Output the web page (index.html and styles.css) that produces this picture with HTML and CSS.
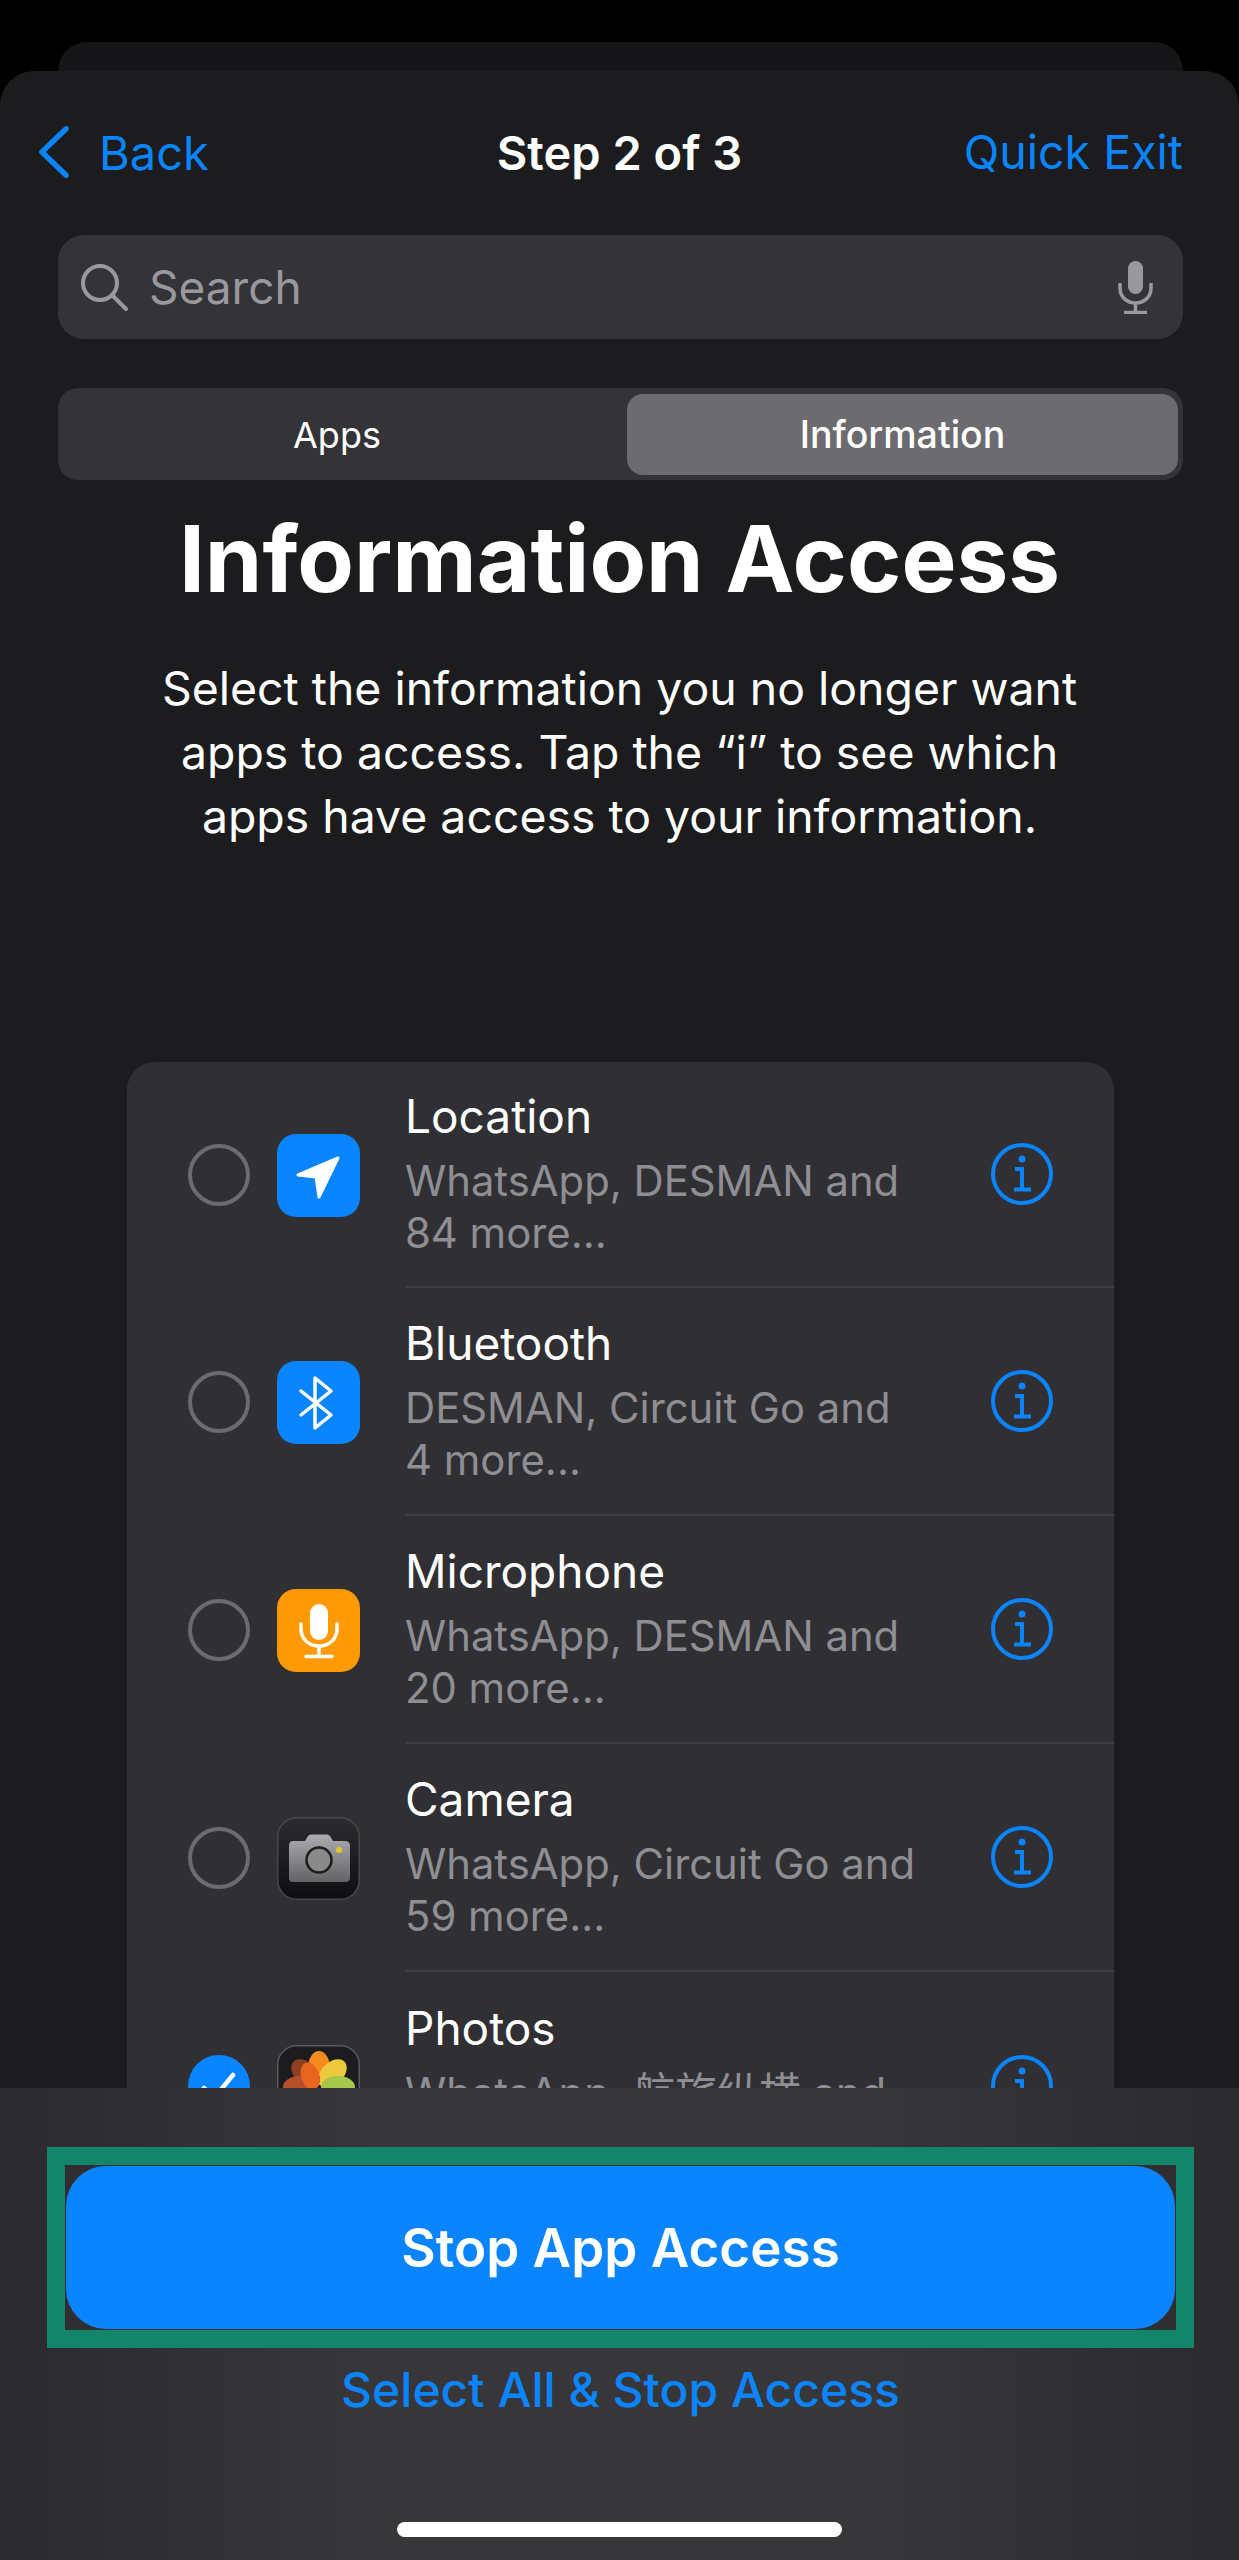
FILE: index.html

```html
<!DOCTYPE html>
<html lang="en">
<head>
  <meta charset="UTF-8" />
  <meta name="viewport" content="width=device-width, initial-scale=1.0"/>
  <title>Information Access</title>
  <link rel="stylesheet" href="styles.css">
</head>
<body>
  <div class="sheet-behind"></div>

  <div class="sheet">
    <!-- nav -->
    <header class="nav">
      <a class="nav-back">
        <svg class="chevron" viewBox="0 0 34 54"><path d="M30 3 L5 27 L30 51"/></svg>
        Back
      </a>
      <div class="nav-title">Step 2 of 3</div>
      <a class="nav-exit">Quick Exit</a>
    </header>

    <!-- search -->
    <div class="search">
      <svg class="search-glass" viewBox="0 0 48 48"><circle cx="20" cy="20" r="17"/><path d="M32 32 L46 46"/></svg>
      <span class="search-text">Search</span>
      <svg class="search-mic" viewBox="0 0 35 53">
        <rect class="fill" x="10" y="0" width="15" height="33" rx="7.5"/>
        <path d="M2 22 V27 C2 36 9 42 17.5 42 C26 42 33 36 33 27 V22 M17.5 42 V51 M6 51.5 H29"/>
      </svg>
    </div>

    <!-- tabs -->
    <div class="tabs">
      <div class="tab">Apps</div>
      <div class="tab tab-on">Information</div>
    </div>

    <main class="scroll">
      <h1>Information Access</h1>
      <p class="intro">Select the information you no longer want<br>apps to access. Tap the “i” to see which<br>apps have access to your information.</p>

      <section class="card">
        <div class="row">
          <span class="radio"></span>
          <svg class="app" viewBox="0 0 83 83">
            <rect width="83" height="83" rx="19" fill="#0a84ff"/>
            <path d="M61 24 L21 41 L39 43 L42 63 Z" fill="#fff" stroke="#fff" stroke-width="3" stroke-linejoin="round"/>
          </svg>
          <div class="row-body">
            <div class="row-text">
              <div class="row-name">Location</div>
              <div class="row-sub">WhatsApp, DESMAN and<br>84 more...</div>
            </div>
            <svg class="info" viewBox="0 0 62 62"><circle cx="31" cy="31" r="29"/><circle class="dot" cx="31" cy="16" r="3.5"/><path d="M24 26 H31 V46 M23 46.5 H40"/></svg>
          </div>
        </div>

        <div class="row">
          <span class="radio"></span>
          <svg class="app" viewBox="0 0 83 83">
            <rect width="83" height="83" rx="19" fill="#0a84ff"/>
            <path d="M24 30 L54 54 L38 67 V17 L54 30 L24 54" fill="none" stroke="#fff" stroke-width="3.5" stroke-linejoin="round" stroke-linecap="round"/>
          </svg>
          <div class="row-body">
            <div class="row-text">
              <div class="row-name">Bluetooth</div>
              <div class="row-sub">DESMAN, Circuit Go and<br>4 more...</div>
            </div>
            <svg class="info" viewBox="0 0 62 62"><circle cx="31" cy="31" r="29"/><circle class="dot" cx="31" cy="16" r="3.5"/><path d="M24 26 H31 V46 M23 46.5 H40"/></svg>
          </div>
        </div>

        <div class="row">
          <span class="radio"></span>
          <svg class="app" viewBox="0 0 83 83">
            <rect width="83" height="83" rx="19" fill="#ff9a05"/>
            <rect x="33" y="15" width="18" height="36" rx="9" fill="#fff"/>
            <path d="M24 35 V40 C24 50 32 57 42 57 C52 57 60 50 60 40 V35 M42 57 V67 M29 67.5 H55" fill="none" stroke="#fff" stroke-width="3.5" stroke-linecap="round"/>
          </svg>
          <div class="row-body">
            <div class="row-text">
              <div class="row-name">Microphone</div>
              <div class="row-sub">WhatsApp, DESMAN and<br>20 more...</div>
            </div>
            <svg class="info" viewBox="0 0 62 62"><circle cx="31" cy="31" r="29"/><circle class="dot" cx="31" cy="16" r="3.5"/><path d="M24 26 H31 V46 M23 46.5 H40"/></svg>
          </div>
        </div>

        <div class="row">
          <span class="radio"></span>
          <svg class="app" viewBox="0 0 83 83">
            <defs>
              <linearGradient id="camBg" x1="0" y1="0" x2="0" y2="1"><stop offset="0" stop-color="#2c2c2e"/><stop offset="1" stop-color="#0e0e10"/></linearGradient>
              <linearGradient id="camBody" x1="0" y1="0" x2="0" y2="1"><stop offset="0" stop-color="#adadaf"/><stop offset="1" stop-color="#636365"/></linearGradient>
            </defs>
            <rect x=".75" y=".75" width="81.5" height="81.5" rx="19" fill="url(#camBg)" stroke="#48484a" stroke-width="1.5"/>
            <path d="M16 24 H28 L31 19 Q32 17.500 34 17.500 H50 Q52 17.500 53 19 L56 24 H68 Q73 24 73 29 V61 Q73 65 68 65 H16 Q12 65 12 61 V29 Q12 24 16 24 Z" fill="url(#camBody)"/>
            <circle cx="42" cy="43" r="12.500" fill="#8a8a8c" stroke="#1c1c1e" stroke-width="2.5"/>
            <circle cx="62" cy="33" r="3" fill="#e0c930"/>
          </svg>
          <div class="row-body">
            <div class="row-text">
              <div class="row-name">Camera</div>
              <div class="row-sub">WhatsApp, Circuit Go and<br>59 more...</div>
            </div>
            <svg class="info" viewBox="0 0 62 62"><circle cx="31" cy="31" r="29"/><circle class="dot" cx="31" cy="16" r="3.5"/><path d="M24 26 H31 V46 M23 46.5 H40"/></svg>
          </div>
        </div>

        <div class="row">
          <span class="radio radio-on">
            <svg viewBox="0 0 62 62"><path d="M16 33 L26 43 L45 20"/></svg>
          </span>
          <svg class="app" viewBox="0 0 83 83">
            <rect x=".75" y=".75" width="81.5" height="81.5" rx="19" fill="#1c1c1e" stroke="#5a5a5e" stroke-width="1.5"/>
            <g transform="translate(42 42)">
              <ellipse cx="0" cy="-19" rx="11" ry="17" fill="#f58a1f"/>
              <ellipse cx="0" cy="-19" rx="11" ry="17" fill="#ecc83c" transform="rotate(45)"/>
              <ellipse cx="0" cy="-19" rx="11" ry="17" fill="#a6c84a" transform="rotate(90)"/>
              <ellipse cx="0" cy="-19" rx="11" ry="17" fill="#8f3f22" transform="rotate(-45)"/>
              <ellipse cx="0" cy="-19" rx="11" ry="17" fill="#b4502c" transform="rotate(-90)"/>
              <ellipse cx="-5" cy="-13" rx="9" ry="14" fill="#e8641f" transform="rotate(-18)"/>
            </g>
          </svg>
          <div class="row-body">
            <div class="row-text">
              <div class="row-name">Photos</div>
              <div class="row-sub row-sub-cut">WhatsApp, 航旅纵横 and</div>
            </div>
            <svg class="info" viewBox="0 0 62 62"><circle cx="31" cy="31" r="29"/><circle class="dot" cx="31" cy="16" r="3.5"/><path d="M24 26 H31 V46 M23 46.5 H40"/></svg>
          </div>
        </div>
      </section>
    </main>

    <!-- bottom actions -->
    <footer class="actions">
      <div class="stop-frame">
        <button class="stop-btn">Stop App Access</button>
      </div>
      <a class="select-all">Select All &amp; Stop Access</a>
      <div class="home-bar"></div>
    </footer>
  </div>
</body>
</html>
```

FILE: styles.css

```css
* { box-sizing: border-box; }
html, body { margin: 0; padding: 0; }
body { width: 1239px; height: 2560px; overflow: hidden; background: #000; color: #fff; font-family: Inter, "Noto Sans CJK SC", sans-serif; padding-top: 42px; display: flex; flex-direction: column; }

.sheet-behind { height: 29px; margin: 0 56px 0 58px; background: #161618; border-radius: 30px 30px 0 0; flex: none; }
.sheet { flex: 1; min-height: 0; display: flex; flex-direction: column; background: #1c1c1e; border-radius: 34px 34px 0 0; }

.nav { display: grid; grid-template-columns: 1fr auto 1fr; align-items: center; height: 64px; margin-top: 49px; padding: 0 56px; font-size: 47px; flex: none; }
.nav-back { display: flex; align-items: center; gap: 29px; margin-left: -19px; color: #0a84ff; }
.chevron { width: 33px; height: 54px; fill: none; stroke: #0a84ff; stroke-width: 5.5; stroke-linecap: round; stroke-linejoin: round; }
.nav-title { font-weight: 600; }
.nav-exit { color: #0a84ff; justify-self: end; font-size: 46.5px; }

.search { display: flex; align-items: center; height: 104px; margin: 51px 56px 0 58px; padding: 0 30px 0 22px; background: #333338; border-radius: 26px; flex: none; }
.search-glass { width: 48px; height: 48px; fill: none; stroke: #98989d; stroke-width: 4; stroke-linecap: round; }
.search-text { margin-left: 21px; flex: 1; font-size: 46px; color: #98989d; }
.search-mic { width: 35px; height: 53px; fill: none; stroke: #98989d; stroke-width: 3.5; }
.search-mic .fill { fill: #98989d; stroke: none; }

.tabs { display: flex; height: 92px; margin: 49px 56px 0 58px; padding: 6px 5px 5px; background: #333338; border-radius: 20px; flex: none; }
.tab { flex: 1; display: flex; align-items: center; justify-content: center; padding-right: 16px; font-size: 36px; }
.tab-on { flex: none; width: 551px; padding-right: 0; background: #6c6c70; border-radius: 16px; font-size: 37.5px; font-weight: 500; }

.scroll { flex: 1; min-height: 0; overflow: hidden; }
h1 { margin: 26px 0 0; font-size: 92.5px; line-height: 104px; font-weight: 700; text-align: center; }
.intro { margin: 46px 0 0; font-size: 46.4px; line-height: 64px; text-align: center; }

.card { margin: 214px 125px 0 127px; background: #303034; border-radius: 28px 28px 0 0; }
.row { display: flex; align-items: center; height: 228px; padding-left: 61px; }
.row:first-child { height: 226px; }
.radio { width: 62px; height: 62px; border: 4px solid #6b6b70; border-radius: 50%; flex: none; }
.radio-on { background: #0a84ff; border: none; }
.radio-on svg { display: block; fill: none; stroke: #fff; stroke-width: 4.5; stroke-linecap: round; stroke-linejoin: round; }
.app { width: 83px; height: 83px; margin: 0 45px 0 27px; flex: none; }
.row-body { flex: 1; align-self: stretch; display: flex; align-items: center; justify-content: space-between; padding-right: 61px; border-bottom: 2px solid #3f3f44; }
.row:last-child .row-body { border-bottom: none; }
.row-text { margin-bottom: 2px; }
.row-name { font-size: 46px; line-height: 58px; }
.row-sub { margin-top: 10px; font-size: 41.8px; line-height: 52px; color: #8e8e93; }
.row-sub-cut { height: 104px; }
.info { width: 62px; height: 62px; flex: none; fill: none; stroke: #0a84ff; stroke-width: 4; }
.info .dot { fill: #0a84ff; stroke: none; }

.actions { height: 472px; flex: none; display: flex; flex-direction: column; align-items: center; padding-top: 59px; background: linear-gradient(90deg, #2b2b2d, #37373a 30%, #37373a 70%, #2b2b2d); }
.stop-frame { width: 1147px; height: 201px; margin-left: 2px; padding: 1px; background: #2f2f32; border: 18px solid #12856a; flex: none; }
.stop-btn { display: block; width: 100%; height: 100%; border: none; border-radius: 40px; background: #0a84ff; color: #fff; font: 600 53px Inter, sans-serif; }
.select-all { margin-top: 12px; margin-left: 2px; font-size: 48px; line-height: 60px; font-weight: 500; color: #0a84ff; }
.home-bar { width: 445px; height: 15px; margin-top: 102px; background: #fff; border-radius: 8px; flex: none; }
```
